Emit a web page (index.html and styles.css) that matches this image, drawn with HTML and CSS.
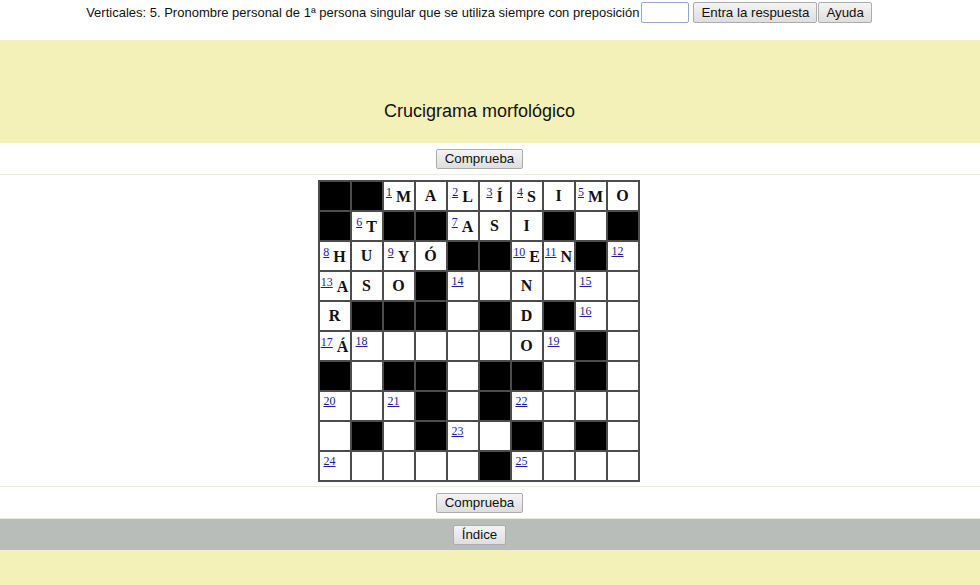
FILE: index.html
```html
<!DOCTYPE html>
<html lang="es">
<head>
<meta charset="utf-8">
<title>Crucigrama morfológico</title>
<link rel="stylesheet" href="styles.css">
</head>
<body>
<div class="top">
  <span class="clue">Verticales: 5. Pronombre personal de 1ª persona singular que se utiliza siempre con preposición</span>
  <input class="answer" type="text">
  <button class="btn">Entra la respuesta</button><button class="btn">Ayuda</button>
</div>
<div class="banner"><h1 class="title">Crucigrama morfológico</h1></div>
<div class="check"><button class="btn small">Comprueba</button></div>
<div class="grid-wrap">
<table class="grid">
<tr><td class="b"></td><td class="b"></td><td><a class="n">1</a> <b>M</b></td><td><b>A</b></td><td><a class="n">2</a> <b>L</b></td><td><a class="n">3</a> <b>Í</b></td><td><a class="n">4</a> <b>S</b></td><td><b>I</b></td><td><a class="n">5</a> <b>M</b></td><td><b>O</b></td></tr>
<tr><td class="b"></td><td><a class="n">6</a> <b>T</b></td><td class="b"></td><td class="b"></td><td><a class="n">7</a> <b>A</b></td><td><b>S</b></td><td><b>I</b></td><td class="b"></td><td></td><td class="b"></td></tr>
<tr><td><a class="n">8</a> <b>H</b></td><td><b>U</b></td><td><a class="n">9</a> <b>Y</b></td><td><b>Ó</b></td><td class="b"></td><td class="b"></td><td><a class="n">10</a> <b>E</b></td><td><a class="n">11</a> <b>N</b></td><td class="b"></td><td class="o"><a class="n">12</a></td></tr>
<tr><td><a class="n">13</a> <b>A</b></td><td><b>S</b></td><td><b>O</b></td><td class="b"></td><td class="o"><a class="n">14</a></td><td></td><td><b>N</b></td><td></td><td class="o"><a class="n">15</a></td><td></td></tr>
<tr><td><b>R</b></td><td class="b"></td><td class="b"></td><td class="b"></td><td></td><td class="b"></td><td><b>D</b></td><td class="b"></td><td class="o"><a class="n">16</a></td><td></td></tr>
<tr><td><a class="n">17</a> <b>Á</b></td><td class="o"><a class="n">18</a></td><td></td><td></td><td></td><td></td><td><b>O</b></td><td class="o"><a class="n">19</a></td><td class="b"></td><td></td></tr>
<tr><td class="b"></td><td></td><td class="b"></td><td class="b"></td><td></td><td class="b"></td><td class="b"></td><td></td><td class="b"></td><td></td></tr>
<tr><td class="o"><a class="n">20</a></td><td></td><td class="o"><a class="n">21</a></td><td class="b"></td><td></td><td class="b"></td><td class="o"><a class="n">22</a></td><td></td><td></td><td></td></tr>
<tr><td></td><td class="b"></td><td></td><td class="b"></td><td class="o"><a class="n">23</a></td><td></td><td class="b"></td><td></td><td class="b"></td><td></td></tr>
<tr><td class="o"><a class="n">24</a></td><td></td><td></td><td></td><td></td><td class="b"></td><td class="o"><a class="n">25</a></td><td></td><td></td><td></td></tr>
</table>
</div>
<div class="check"><button class="btn small">Comprueba</button></div>
<div class="nav"><button class="btn small">Índice</button></div>
<div class="foot"></div>
</body>
</html>
```
FILE: styles.css
```css
html, body {
  margin: 0;
  padding: 0;
  background: #ffffff;
  font-family: "Liberation Sans", Arial, sans-serif;
  color: #111;
  overflow: hidden;
}
.top {
  height: 40px;
  box-sizing: border-box;
  padding-top: 2px;
  padding-right: 22px;
  display: flex;
  justify-content: center;
  align-items: flex-start;
  font-size: 13px;
}
.clue {
  line-height: 21px;
  margin-right: 2px;
}
.answer {
  width: 48px;
  height: 21px;
  box-sizing: border-box;
  border: 1px solid #8fa8cc;
  border-radius: 2px;
  margin: 0 4px 0 0;
  padding: 0;
}
.btn {
  font-family: "Liberation Sans", Arial, sans-serif;
  font-size: 13.3px;
  color: #111;
  background: linear-gradient(#f4f4f4, #dedede);
  border: 1px solid #acacac;
  border-radius: 2px;
  height: 21px;
  padding: 0 7px;
  margin: 0;
  line-height: 19px;
}
.btn + .btn {
  margin-left: 1px;
}
.banner {
  height: 103px;
  background: #f4f1b8;
  display: flex;
  justify-content: center;
  align-items: flex-end;
  box-sizing: border-box;
  padding-bottom: 21px;
  padding-right: 21px;
}
.title {
  margin: 0;
  font-size: 18px;
  font-weight: normal;
  line-height: 21px;
  color: #111;
}
.check {
  height: 31px;
  border-bottom: 1px solid #eeecd2;
  display: flex;
  justify-content: center;
  align-items: center;
  padding-right: 21px;
}
.small {
  height: 20px;
  font-size: 13.3px;
  padding: 0 8px;
  line-height: 18px;
}
.grid-wrap {
  display: flex;
  justify-content: center;
  padding: 5px 23px 4px 0;
  border-bottom: 1px solid #eeecd2;
}
.grid {
  border-collapse: collapse;
  border: 2px solid #4c4c4c;
}
.grid td {
  width: 30px;
  min-width: 30px;
  max-width: 30px;
  height: 28px;
  padding: 0;
  border: 2px solid #4c4c4c;
  background: #fff;
  text-align: center;
  vertical-align: middle;
  font-family: "Liberation Serif", "Times New Roman", serif;
  font-size: 16px;
  line-height: 18px;
  white-space: nowrap;
  overflow: hidden;
}
.grid td.b {
  background: #000;
}
.grid td.o {
  text-align: left;
  vertical-align: top;
  padding: 4px 0 0 4px;
  width: 26px;
  min-width: 26px;
  max-width: 26px;
  height: 24px;
  line-height: 12px;
}
.grid b {
  font-weight: bold;
  color: #111;
}
.n {
  font-size: 12px;
  color: #1c1c9c;
  text-decoration: underline;
  vertical-align: 6px;
  line-height: 10px;
}
.grid td.o .n {
  vertical-align: top;
}
.nav {
  height: 31px;
  background: #b9bdb9;
  display: flex;
  justify-content: center;
  align-items: center;
  padding-right: 21px;
}
.foot {
  height: 60px;
  background: #f4f1b8;
}
```
